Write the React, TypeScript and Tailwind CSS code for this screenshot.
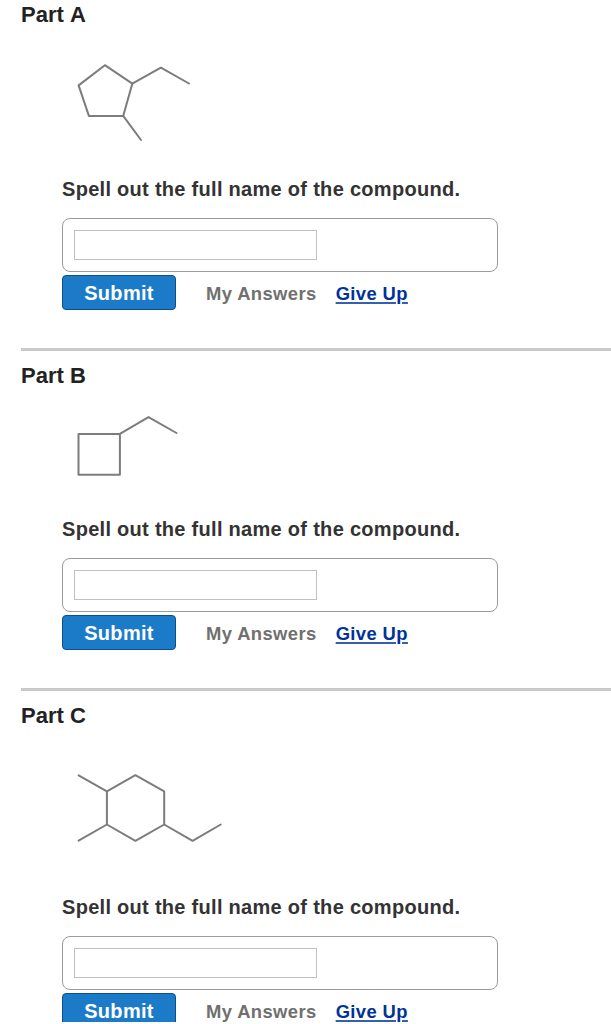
import { useState, type ReactNode } from "react";

type Part = {
  id: string;
  title: string;
  figure: ReactNode;
};

const figureStroke = {
  fill: "none",
  stroke: "#7c7c7c",
  strokeWidth: 2,
  strokeLinejoin: "round" as const,
  strokeLinecap: "round" as const,
};

const parts: Part[] = [
  {
    id: "a",
    title: "Part A",
    figure: (
      <svg width="180" height="146" viewBox="62 29 180 146" {...figureStroke}>
        <path d="M104.9 65.2 L132.3 83.7 L123.2 115.9 L88.9 115.9 L78.6 85.4 Z" />
        <path d="M132.3 83.7 L160.9 67.7 L189 83.5" />
        <path d="M123.2 115.9 L141 140" />
      </svg>
    ),
  },
  {
    id: "b",
    title: "Part B",
    figure: (
      <svg width="180" height="125" viewBox="62 390 180 125" {...figureStroke}>
        <path d="M78.5 433.9 H119.9 V474.7 H78.5 Z" />
        <path d="M119.9 433.9 L148.5 417.1 L176.5 433" />
      </svg>
    ),
  },
  {
    id: "c",
    title: "Part C",
    figure: (
      <svg width="180" height="163" viewBox="62 730 180 163" {...figureStroke}>
        <path d="M135.4 775.2 L164.2 791.4 V824.5 L135.4 840.8 L106.9 824.5 V791.4 Z" />
        <path d="M106.9 791.4 L78.6 775.3" />
        <path d="M106.9 824.5 L78.6 840.7" />
        <path d="M164.2 824.5 L192.6 840.8 L220.7 824.5" />
      </svg>
    ),
  },
];

function QuestionPart({ part }: { part: Part }) {
  const [answer, setAnswer] = useState("");

  return (
    <section>
      <h2 className="h-7 text-[22px] leading-7 font-bold text-[#222] [font-kerning:none]">{part.title}</h2>
      <div className="pl-[41px]">
        <div className="flex">{part.figure}</div>
        <p className="h-7 text-[20px] leading-7 font-bold tracking-[0.29px] whitespace-nowrap text-[#333]">
          Spell out the full name of the compound.
        </p>
        {/* Answer box */}
        <div className="mt-[15px] h-[54px] w-[436px] rounded-lg border-[1.5px] border-[#9c9c9c] px-[11px] pt-[11px]">
          <input
            aria-label={part.title}
            value={answer}
            onChange={(e) => setAnswer(e.target.value)}
            className="block h-[30px] w-[243px] border border-[#c0c0c0] px-2 text-base outline-none"
          />
        </div>
        {/* Actions */}
        <div className="mt-[3px] flex h-[35px] items-center text-[18.4px] font-bold tracking-[0.4px]">
          <button className="h-[35px] w-[114px] rounded-[4px] border-[1.5px] border-[#0d4f87] bg-[#1c7bc9] text-[20px] tracking-[0.3px] text-white">
            Submit
          </button>
          <span className="ml-[30px] pt-[3px] text-[#707070]">My Answers</span>
          <a
            href="#"
            className="ml-[19px] pt-[3px] text-[#003399] underline decoration-[#3560b0] decoration-2 underline-offset-2"
          >
            Give Up
          </a>
        </div>
      </div>
    </section>
  );
}

export default function App() {
  return (
    <div className="h-[1024px] bg-white pb-0.5 font-['Liberation_Sans',Arial,sans-serif]">
      <main className="flex h-[1022px] flex-col overflow-hidden pt-px pl-[21px]">
        {parts.map((part, i) => (
          <div key={part.id} className={i === 0 ? "" : "mt-[38px] border-t-[3px] border-[#c9c9c9] pt-[11px]"}>
            <QuestionPart part={part} />
          </div>
        ))}
      </main>
    </div>
  );
}
